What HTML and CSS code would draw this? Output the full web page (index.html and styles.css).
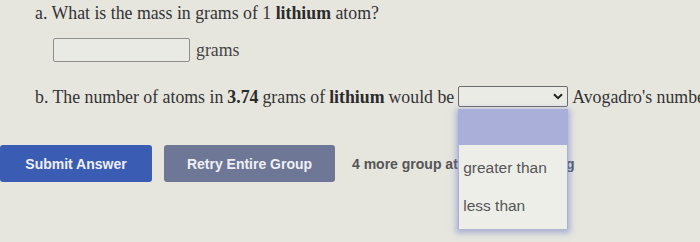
FILE: index.html
```html
<!DOCTYPE html>
<html>
<head>
<meta charset="utf-8">
<link rel="stylesheet" href="styles.css">
</head>
<body>
<div class="page">
  <p class="q q-a">a. What is the mass in grams of 1 <b>lithium</b> atom?</p>
  <div class="answer-row">
    <span class="text-input"></span>
    <span class="unit">grams</span>
  </div>
  <p class="q q-b">b. The number of atoms in <b>3.74</b> grams of <b>lithium</b> would be
    <span class="select-wrap">
      <span class="select">
        <svg class="chev" width="10" height="7" viewBox="0 0 10 7"><path d="M1 1.2 L5 5.2 L9 1.2" fill="none" stroke="#222" stroke-width="2"/></svg>
      </span>
      <span class="popup">
        <span class="opt opt-blank"></span>
        <span class="opt-list">
          <span class="opt">greater than</span>
          <span class="opt">less than</span>
        </span>
      </span>
    </span>
    <span class="after">Avogadro's number.</span>
  </p>
  <div class="actions">
    <button class="btn btn-submit">Submit Answer</button>
    <button class="btn btn-retry">Retry Entire Group</button>
    <span class="remaining">4 more group attempts remaining</span>
  </div>
</div>
</body>
</html>
```
FILE: styles.css
```css
html, body {
  margin: 0;
  padding: 0;
}
body {
  background: #e6e6df;
  width: 700px;
  height: 242px;
  overflow: hidden;
  font-family: "Liberation Serif", "Times New Roman", serif;
  color: #333;
}
.page {
  padding: 0 0 0 35px;
  white-space: nowrap;
}
.q {
  margin: 0;
  font-size: 17.8px;
  line-height: 20px;
}
.q b {
  font-weight: bold;
  color: #2b2b2b;
}
.q-a {
  padding-top: 3px;
}
.answer-row {
  display: flex;
  align-items: center;
  gap: 6px;
  margin: 15px 0 0 18px;
}
.text-input {
  display: block;
  width: 135px;
  height: 22px;
  border: 1px solid #8e8e8a;
  border-radius: 2px;
  background: #eaeae4;
}
.unit {
  font-size: 17.8px;
  line-height: 20px;
  color: #444;
}
.q-b {
  margin-top: 24px;
  display: flex;
  align-items: center;
  gap: 4px;
}
.select-wrap {
  position: relative;
  display: block;
  flex: none;
}
.select {
  display: flex;
  align-items: center;
  justify-content: flex-end;
  box-sizing: border-box;
  width: 110px;
  height: 21px;
  border: 1px solid #6b6b6b;
  border-radius: 2px;
  background: #ebebe6;
  padding-right: 4px;
}
.chev {
  display: block;
}
.popup {
  position: absolute;
  left: 0;
  top: 23px;
  width: 110px;
  display: flex;
  flex-direction: column;
  background: #a9afda;
  box-shadow: 0 2px 6px 2px rgba(120, 130, 200, 0.55);
  z-index: 5;
}
.opt-blank {
  display: block;
  height: 41px;
  background: #a9afd9;
}
.opt-list {
  display: flex;
  flex-direction: column;
  background: #eeeee9;
  margin: 0 1px;
  padding: 4px 0 6px;
}
.opt {
  display: block;
  font-family: "Liberation Sans", Arial, sans-serif;
  font-size: 15.5px;
  line-height: 38px;
  height: 36px;
  padding-left: 4px;
  color: #555;
}
.opt-list .opt + .opt {
  margin-top: 2px;
}
.after {
  color: #333;
}
.actions {
  display: flex;
  align-items: center;
  margin: 38px 0 0 -35px;
}
.btn {
  border: none;
  border-radius: 3px;
  height: 37px;
  font-family: "Liberation Sans", Arial, sans-serif;
  font-weight: bold;
  font-size: 14px;
  color: #eef0f6;
  padding: 0;
}
.btn-submit {
  width: 152px;
  background: #3b5cb3;
  text-align: center;
  margin-right: 12px;
}
.btn-retry {
  width: 171px;
  background: #6f7797;
  margin-right: 17px;
}
.remaining {
  font-family: "Liberation Sans", Arial, sans-serif;
  font-weight: bold;
  font-size: 14px;
  color: #555;
}
```
